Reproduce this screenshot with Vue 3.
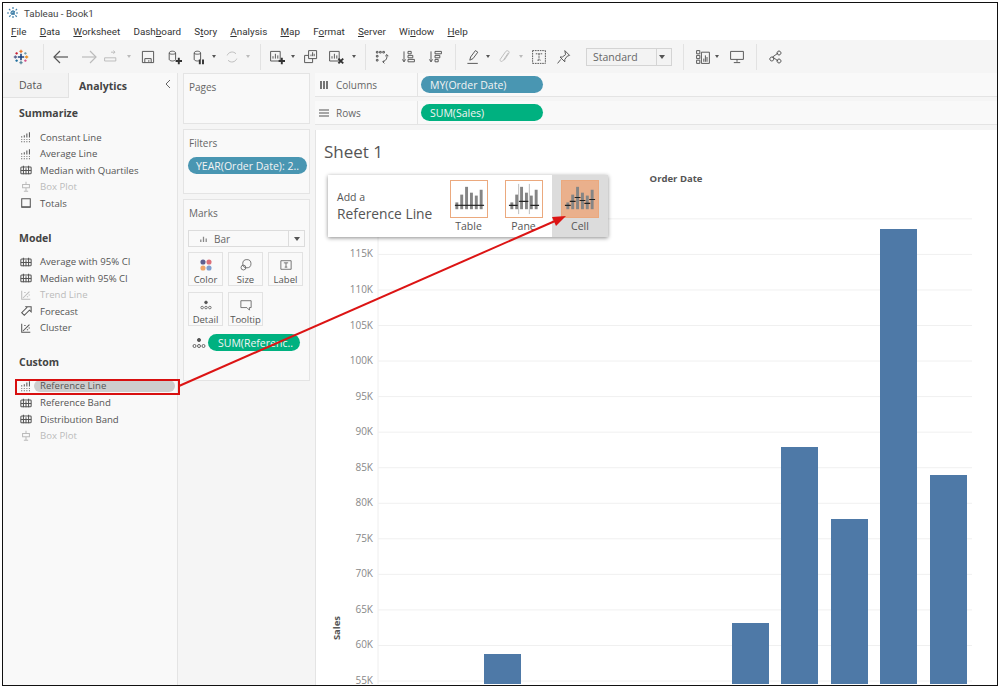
<script setup>
const menus = [
  ['', 'F', 'ile'], ['', 'D', 'ata'], ['', 'W', 'orksheet'], ['Dash', 'b', 'oard'], ['S', 't', 'ory'],
  ['', 'A', 'nalysis'], ['', 'M', 'ap'], ['F', 'o', 'rmat'], ['', 'S', 'erver'], ['Wi', 'n', 'dow'], ['', 'H', 'elp'],
]

// toolbar icons, 20x20 box
const toolIcons = {
  back: ['M17 10H3', 'M9 4l-6 6 6 6'],
  save: ['M3 3h14v14H3z', 'M6 17v-5h8v5', 'M11 14v2'],
  addData: ['M4 5c0-3 8-3 8 0v8c0 1-2 2-4 2s-4-1-4-2z', 'M4 5c0 2 8 2 8 0'],
  pauseData: ['M4 5c0-3 8-3 8 0v8c0 1-2 2-4 2s-4-1-4-2z', 'M4 5c0 2 8 2 8 0'],
  refresh: ['M15 6a6.5 6.5 0 0 0-11 2', 'M5 14a6.5 6.5 0 0 0 11-2'],
  swapGray: ['M2 11h14v4H2z', 'M10 4h5l-2-2M15 4l-2 2'],
  sheet: ['M2 3h12v12H2z', 'M5 12V9M8 12V6M11 12V8'],
  dup: ['M7 2h10v10H7z', 'M2 8h5M2 8v9h10v-5', 'M10 9V7M12 9V4M14 9V6'],
  swapAxes: ['M3 3h2v2H3zM7 3h2v2H7zM11 3h2v2h-2zM3 8h2v2H3zM3 13h2v2H3z', 'M16 7c1 4-1 8-5 9', 'M13 14l-2 2 2 2', 'M14 9l2-2 2 2'],
  sortAsc: ['M5 3v13', 'M3 13l2 3 2-3', 'M10 3h4v3h-4zM10 8h6v3h-6zM10 13h8v3h-8z'],
  sortDesc: ['M5 3v13', 'M3 13l2 3 2-3', 'M10 3h8v3h-8zM10 8h6v3h-6zM10 13h4v3h-4z'],
  highlight: ['M6 14l1-4 6-8 3 2-6 8z', 'M3 18h13'],
  clip: ['M14 5l-6 9c-2 3-5 1-4-1l7-10c2-2 5 0 4 2l-6 9'],
  text: ['M2 2h16M2 18h16M2 2v16M18 2v16', 'M6 6h8M10 6v8M8 14h4'],
  pin: ['M11 2l6 6-3 1-3 4 0 3-6-6 3 0 4-3z', 'M6 13l-4 5'],
  showMe: ['M2 2h4v4H2zM2 8h4v4H2zM2 14h4v4H2z', 'M8 4h10v14H8z', 'M11 16v-4M13 16V8M15 16v-6'],
  present: ['M2 3h16v10H2z', 'M10 13v3M6 17h8'],
  share: ['M7 10l7-5M7 10l7 5', 'M6 10a2.5 2.5 0 1 1-.01 0zM15 2.5a2.5 2.5 0 1 1-.01 0zM15 12.5a2.5 2.5 0 1 1-.01 0z'],
}

const tools = [
  { w: 36, logo: true }, { w: 8, sep: true },
  { w: 28, icon: 'back', size: 20 }, { w: 27, icon: 'back', flip: true, faint: true, size: 20 },
  { w: 18, icon: 'swapGray', faint: true }, { w: 18, drop: true, faint: true },
  { w: 20, icon: 'save' }, { w: 32, icon: 'addData', badge: 'plus' },
  { w: 18, icon: 'pauseData', badge: 'pause' }, { w: 12, drop: true },
  { w: 24, icon: 'refresh', faint: true }, { w: 8, drop: true, faint: true }, { w: 16, sep: true },
  { w: 18, icon: 'sheet', badge: 'plus' }, { w: 14, drop: true }, { w: 22, icon: 'dup' },
  { w: 28, icon: 'sheet', badge: 'cross' }, { w: 8, drop: true }, { w: 14, sep: true },
  { w: 20, icon: 'swapAxes' }, { w: 32, icon: 'sortAsc' }, { w: 22, icon: 'sortDesc' }, { w: 18, sep: true },
  { w: 18, icon: 'highlight' }, { w: 12, drop: true }, { w: 22, icon: 'clip', faint: true },
  { w: 10, drop: true, faint: true }, { w: 26, icon: 'text', dashed: true }, { w: 24, icon: 'pin' },
]
const toolsEnd = [
  { w: 22, sep: true }, { w: 18, icon: 'showMe' }, { w: 10, drop: true }, { w: 30, icon: 'present' },
  { w: 8, sep: true }, { w: 30, icon: 'share' },
]

// analytics pane icons, 14x14 box
const paneIcons = {
  line: ['M2 6v1.5M5 5v2.5M8 3v4.5M11 1.5v6', 'M2 9.5v1M5 9.5v1M8 9.5v1M11 9.5v1M2 12v1M5 12v1M8 12v1M11 12v1'],
  band: ['M2 3.5h10a1 1 0 0 1 1 1v6a1 1 0 0 1-1 1H2a1 1 0 0 1-1-1v-6a1 1 0 0 1 1-1z', 'M1 7.5h12M4 2v10M7 5v7M10 2v10'],
  box: ['M7 1v3M3 4h8v4H3zM7 8v4M4.5 12h5'],
  totals: ['M2 2h10v10H2z', 'M2 11.5h10'],
  trend: ['M2 2v10h10', 'M3.5 10.5L11 3', 'M8 9h1.5M5 4h1.5M10 7h1.5'],
  forecast: ['M7 2h6v6l-2-2-6 6-3-3 6-6z'],
}

const sections = [
  { title: 'Summarize', items: [
    { label: 'Constant Line', icon: 'line' }, { label: 'Average Line', icon: 'line' },
    { label: 'Median with Quartiles', icon: 'band' }, { label: 'Box Plot', icon: 'box', off: true },
    { label: 'Totals', icon: 'totals' },
  ] },
  { title: 'Model', items: [
    { label: 'Average with 95% CI', icon: 'band' }, { label: 'Median with 95% CI', icon: 'band' },
    { label: 'Trend Line', icon: 'trend', off: true }, { label: 'Forecast', icon: 'forecast' },
    { label: 'Cluster', icon: 'trend' },
  ] },
  { title: 'Custom', items: [
    { label: 'Reference Line', icon: 'line', on: true }, { label: 'Reference Band', icon: 'band' },
    { label: 'Distribution Band', icon: 'band' }, { label: 'Box Plot', icon: 'box', off: true },
  ] },
]

// plot geometry, relative to the svg under the "Order Date" header
const plotH = 498
const zeroY = 495
const yFor = v => zeroY - (v - 55) * 7.11
const ticks = []
for (let v = 55; v <= 120; v += 5) ticks.push({ v, y: yFor(v) })
const bars = [
  { x: 168, top: 468 }, { x: 416, top: 437 }, { x: 465, top: 261 },
  { x: 515, top: 333 }, { x: 564, top: 43 }, { x: 614, top: 289 },
]

// bars + line for the little reference line previews
const preview = [[6, 22], [11, 14], [16, 6], [21, 12], [26, 15], [31, 9]]
</script>

<template>
  <div class="frame">
    <div class="title-bar">
      <svg class="app-icon" viewBox="0 0 12 12">
        <path d="M6 0v12M0 6h12M2 2l8 8M10 2l-8 8" stroke="#3f7fa8" stroke-width="1.2" stroke-dasharray="2 1" fill="none" />
      </svg>
      <span>Tableau - Book1</span>
    </div>

    <div class="menu-bar">
      <span v-for="m in menus" :key="m[1] + m[2]">{{ m[0] }}<u>{{ m[1] }}</u>{{ m[2] }}</span>
    </div>

    <div class="tool-bar">
      <template v-for="(list, n) in [tools, toolsEnd]" :key="n">
        <div v-if="n === 1" class="combo">
          <span>Standard</span>
          <i class="combo-arrow"></i>
        </div>
        <div
          v-for="(t, i) in list"
          :key="i"
          class="tool"
          :class="{ faint: t.faint }"
          :style="{ width: t.w + 'px' }"
        >
          <i v-if="t.sep" class="tool-sep"></i>
          <i v-else-if="t.drop" class="tool-drop"></i>
          <svg v-else-if="t.logo" class="tool-logo" viewBox="0 0 20 20" fill="none" stroke-width="1.6">
            <path d="M10 6v8M6 10h8" stroke="#1f447e" stroke-width="2" />
            <path d="M10 1v4M8 3h4" stroke="#e8762d" />
            <path d="M10 15v4M8 17h4" stroke="#59879b" />
            <path d="M1 10h4M3 8v4" stroke="#5b6591" />
            <path d="M15 10h4M17 8v4" stroke="#eb912b" />
            <path d="M4.5 4v3M3 5.5h3" stroke="#c72035" />
            <path d="M15.5 4v3M14 5.5h3" stroke="#7099a6" />
            <path d="M4.5 13v3M3 14.5h3" stroke="#1f6f9f" />
            <path d="M15.5 13v3M14 14.5h3" stroke="#d4548a" />
          </svg>
          <svg
            v-else
            class="tool-icon"
            :class="{ flip: t.flip, dashed: t.dashed, wide: t.size }"
            viewBox="0 0 20 20"
          >
            <path v-for="d in toolIcons[t.icon]" :key="d" :d="d" />
            <path v-if="t.badge === 'plus'" class="badge" d="M16 11v8M12 15h8" />
            <path v-if="t.badge === 'pause'" class="badge" d="M11 13v6M15 13v6" />
            <path v-if="t.badge === 'cross'" class="badge" d="M13 12l6 6M19 12l-6 6" />
          </svg>
        </div>
      </template>
    </div>

    <div class="work">
      <aside class="side">
        <div class="tabs">
          <div class="tab tab-data">Data</div>
          <div class="tab tab-active">Analytics</div>
          <svg class="tab-back" viewBox="0 0 8 10"><path d="M6 1L2 5l4 4" /></svg>
        </div>
        <section v-for="s in sections" :key="s.title" class="group">
          <h3>{{ s.title }}</h3>
          <div
            v-for="item in s.items"
            :key="item.label"
            class="row"
            :class="{ off: item.off, on: item.on }"
          >
            <svg viewBox="0 0 14 14"><path v-for="d in paneIcons[item.icon]" :key="d" :d="d" /></svg>
            <span>{{ item.label }}</span>
          </div>
        </section>
      </aside>

      <div class="cards">
        <div class="card card-pages"><h4>Pages</h4></div>
        <div class="card card-filters">
          <h4>Filters</h4>
          <div class="pill blue pill-filter">YEAR(Order Date): 2..</div>
        </div>
        <div class="card card-marks">
          <h4>Marks</h4>
          <div class="mark-type">
            <svg viewBox="0 0 10 10"><path d="M2 9V6M5 9V3M8 9V5" /></svg>
            <span>Bar</span>
            <b><i class="combo-arrow"></i></b>
          </div>
          <div class="mark-grid">
            <div class="mark-btn">
              <svg viewBox="0 0 14 14">
                <circle cx="3.5" cy="3.5" r="3" fill="#5f5f8f" />
                <circle cx="10.5" cy="3.5" r="3" fill="#dd6f78" />
                <circle cx="3.5" cy="10.5" r="3" fill="#efa56a" />
                <circle cx="10.5" cy="10.5" r="3" fill="#7f9fd0" />
              </svg>
              <span>Color</span>
            </div>
            <div class="mark-btn">
              <svg viewBox="0 0 14 14" class="line-icon">
                <circle cx="8" cy="5.5" r="4.8" /><circle cx="4" cy="10" r="2.8" />
              </svg>
              <span>Size</span>
            </div>
            <div class="mark-btn">
              <svg viewBox="0 0 14 14" class="line-icon">
                <path d="M1 2h12v10H1z" /><path d="M4.5 4.5h5M7 4.5v5M5.5 9.5h3" />
              </svg>
              <span>Label</span>
            </div>
            <div class="mark-btn">
              <svg viewBox="0 0 14 14" class="line-icon">
                <circle cx="7" cy="4" r="1.6" fill="#555" />
                <circle cx="2.5" cy="10" r="1.5" /><circle cx="7" cy="10" r="1.5" /><circle cx="11.5" cy="10" r="1.5" />
              </svg>
              <span>Detail</span>
            </div>
            <div class="mark-btn">
              <svg viewBox="0 0 14 14" class="line-icon"><path d="M1 2h12v8h-2v3l-3-3H1z" /></svg>
              <span>Tooltip</span>
            </div>
          </div>
          <div class="mark-field">
            <svg viewBox="0 0 14 14" class="line-icon">
              <circle cx="7" cy="4" r="1.6" fill="#555" />
              <circle cx="2.5" cy="10" r="1.5" /><circle cx="7" cy="10" r="1.5" /><circle cx="11.5" cy="10" r="1.5" />
            </svg>
            <div class="pill green pill-mark">SUM(Referenc..</div>
          </div>
        </div>
      </div>

      <div class="view">
        <div class="shelf">
          <div class="shelf-name">
            <svg viewBox="0 0 10 10"><path d="M2 1v8M5 1v8M8 1v8" stroke-width="1.6" /></svg>
            <span>Columns</span>
          </div>
          <div class="pill blue pill-shelf">MY(Order Date)</div>
        </div>
        <div class="shelf">
          <div class="shelf-name">
            <svg viewBox="0 0 10 10"><path d="M0 2h10M0 5h10M0 8h10" stroke-width="1.1" /></svg>
            <span>Rows</span>
          </div>
          <div class="pill green pill-shelf">SUM(Sales)</div>
        </div>

        <div class="sheet">
          <div class="sheet-title">Sheet 1</div>
          <div class="axis-title">Order Date</div>
          <svg class="plot" :viewBox="`0 0 682 ${plotH}`">
            <line x1="62" x2="62" y1="0" :y2="plotH" class="axis" />
            <g v-for="t in ticks" :key="t.v">
              <line x1="62" x2="656" :y1="t.y" :y2="t.y" class="grid" />
              <!-- the 120K label sits under the popup -->
              <text v-if="t.v < 120" x="57" :y="t.y + 3" class="tick">{{ t.v }}K</text>
            </g>
            <rect v-for="b in bars" :key="b.x" :x="b.x" :y="b.top" width="37" :height="plotH - b.top" class="bar" />
            <text transform="translate(24 442) rotate(-90)" class="y-title">Sales</text>
          </svg>

          <div class="popup">
            <div class="popup-text">
              <small>Add a</small>
              <strong>Reference Line</strong>
            </div>
            <div v-for="kind in ['Table', 'Pane', 'Cell']" :key="kind" class="scope" :class="{ picked: kind === 'Cell' }">
              <svg viewBox="0 0 37 37">
                <rect v-for="p in preview" :key="p[0]" :x="p[0] - 1.5" :y="p[1]" width="3" :height="29 - p[1]" class="preview-bar" />
                <path v-if="kind === 'Table'" d="M4 25h30" class="preview-line" />
                <path v-if="kind === 'Pane'" d="M3 25h9M13 21h10M25 25h9" class="preview-line" />
                <path v-if="kind === 'Pane'" d="M13 3v31M24 3v31" class="preview-div" />
                <path v-if="kind === 'Cell'" d="M3 25h6M8 21h6M13 17h6M18 20h6M23 23h6M28 19h6" class="preview-line" />
              </svg>
              <span>{{ kind }}</span>
            </div>
          </div>
        </div>
      </div>
    </div>

    <!-- callout drawn on top of the screenshot -->
    <div class="callout-box"></div>
    <svg class="callout-arrow" viewBox="0 0 1002 690">
      <path d="M179 386L555 221" stroke="#dc1414" stroke-width="2" fill="none" />
      <path d="M566 216L552 217L556 226z" fill="#dc1414" />
    </svg>
  </div>
</template>

<style scoped>
.frame {
  position: relative;
  width: 996px;
  height: 684px;
  margin: 2px 0 0 2px;
  box-sizing: border-box;
  border: 1.5px solid #111;
  overflow: hidden;
  background: #fff;
  color: #444;
  font-family: "Open Sans", "Noto Sans", sans-serif;
  display: flex;
  flex-direction: column;
}

.title-bar {
  height: 20px;
  display: flex;
  align-items: center;
  gap: 5px;
  padding-left: 4px;
  font-family: Roboto, sans-serif;
  font-size: 9.8px;
  color: #444;
  flex: none;
}
.app-icon {
  width: 12px;
  height: 12px;
}

.menu-bar {
  height: 17px;
  display: flex;
  align-items: center;
  gap: 13.2px;
  padding-left: 8px;
  font-family: Roboto, sans-serif;
  font-size: 9.9px;
  color: #333;
  flex: none;
}

.tool-bar {
  height: 33px;
  background: #f5f5f5;
  display: flex;
  align-items: center;
  flex: none;
}
.tool {
  height: 100%;
  flex: none;
  display: flex;
  align-items: center;
  justify-content: center;
  color: #555;
}
.tool.faint {
  color: #bbb;
}
.tool-sep {
  width: 1px;
  height: 26px;
  background: #e2e2e2;
}
.tool-drop {
  width: 0;
  height: 0;
  border: 2px solid transparent;
  border-top: 3px solid currentColor;
  border-bottom: 0;
}
.tool-logo {
  width: 16px;
  height: 16px;
}
.tool-icon {
  width: 16px;
  height: 16px;
  flex: none;
  overflow: visible;
  fill: none;
  stroke: currentColor;
  stroke-width: 1.2;
}
.tool-icon.wide {
  width: 20px;
  height: 20px;
}
.tool-icon.flip {
  transform: scaleX(-1);
}
.tool-icon.dashed {
  stroke-dasharray: 2 1;
}
.tool-icon .badge {
  stroke: #333;
  stroke-width: 2.4;
  stroke-dasharray: none;
}
.combo {
  width: 86px;
  height: 18px;
  margin-left: 10px;
  flex: none;
  box-sizing: border-box;
  display: flex;
  align-items: center;
  border: 1px solid #d4d4d4;
  background: #f3f3f3;
  font-size: 10.5px;
  color: #666;
  padding-left: 6px;
  position: relative;
}
.combo span {
  flex: 1;
}
.combo-arrow {
  width: 0;
  height: 0;
  border: 3px solid transparent;
  border-top: 4px solid #555;
  border-bottom: 0;
  display: block;
}
.combo .combo-arrow {
  margin-right: 6px;
}
.combo::after {
  content: "";
  position: absolute;
  right: 14px;
  top: 0;
  bottom: 0;
  width: 1px;
  background: #d4d4d4;
}

.work {
  flex: 1;
  min-height: 0;
  display: flex;
  background: #f5f5f5;
}

.side {
  width: 174px;
  flex: none;
  background: #f9f9f9;
  border-right: 1px solid #e4e4e4;
}
.tabs {
  display: flex;
  height: 25px;
  position: relative;
  font-size: 10.5px;
}
.tab {
  display: flex;
  align-items: center;
  box-sizing: border-box;
}
.tab-data {
  width: 66px;
  padding-left: 16px;
  color: #555;
  background: #f3f3f3;
  border-right: 1px solid #e2e2e2;
  border-bottom: 1px solid #e2e2e2;
}
.tab-active {
  flex: 1;
  padding-left: 10px;
  font-weight: 700;
  color: #444;
}
.tab-back {
  position: absolute;
  right: 5px;
  top: 6px;
  width: 8px;
  height: 10px;
  fill: none;
  stroke: #666;
}
.group {
  padding-top: 8px;
  height: 124.5px;
  box-sizing: border-box;
}
.group h3 {
  margin: 0 0 8px 16px;
  height: 15px;
  line-height: 15px;
  font-size: 10.5px;
  font-weight: 700;
  color: #444;
}
.row {
  height: 16.5px;
  display: flex;
  align-items: center;
  gap: 8px;
  margin: 0 2px 0 17px;
  font-size: 9.6px;
  color: #555;
}
.row svg {
  width: 12px;
  height: 12px;
  flex: none;
  fill: none;
  stroke: #555;
  stroke-width: 1.2;
}
.row.off {
  color: #bbb;
}
.row.off svg {
  stroke: #bbb;
}
.row.on span {
  flex: 1;
  height: 12px;
  line-height: 12px;
  margin-left: -6px;
  padding-left: 6px;
  border-radius: 6px;
  background: #cdcdcd;
}

.cards {
  width: 127px;
  flex: none;
  padding: 0 5px;
  display: flex;
  flex-direction: column;
  gap: 5px;
}
.card {
  box-sizing: border-box;
  background: #f9f9f9;
  border: 1px solid #e4e4e4;
  padding: 6px 4px;
}
.card h4 {
  margin: 0 0 0 1px;
  font-size: 10px;
  font-weight: 400;
  color: #666;
  line-height: 14px;
}
.card-pages {
  height: 51px;
}
.card-filters {
  height: 65px;
}
.card-marks {
  height: 182px;
}
.pill {
  border-radius: 9px;
  color: #f4f4f4;
  font-size: 10.5px;
  display: flex;
  align-items: center;
  white-space: nowrap;
  overflow: hidden;
  box-sizing: border-box;
}
.blue {
  background: #4996b2;
}
.green {
  background: #00b180;
}
.pill-filter {
  margin-top: 7px;
  height: 17px;
  width: 119px;
  padding-left: 8px;
}

.mark-type {
  height: 17px;
  margin-top: 10px;
  box-sizing: border-box;
  border: 1px solid #dcdcdc;
  display: flex;
  align-items: center;
  font-size: 10px;
  color: #666;
}
.mark-type svg {
  width: 9px;
  height: 9px;
  margin: 0 6px 0 10px;
  fill: none;
  stroke: #888;
  stroke-width: 1.4;
}
.mark-type span {
  flex: 1;
}
.mark-type b {
  width: 15px;
  height: 100%;
  display: flex;
  align-items: center;
  justify-content: center;
  border-left: 1px solid #dcdcdc;
}
.mark-grid {
  display: grid;
  grid-template-columns: repeat(3, 35px);
  gap: 6px 5px;
  margin-top: 5px;
}
.mark-btn {
  height: 34px;
  box-sizing: border-box;
  border: 1px solid #e2e2e2;
  display: flex;
  flex-direction: column;
  align-items: center;
  gap: 2px;
  padding-top: 6px;
  font-size: 9.5px;
  color: #555;
}
.mark-btn svg {
  width: 12px;
  height: 12px;
  flex: none;
}
.line-icon {
  fill: none;
  stroke: #555;
  stroke-width: 0.9;
}
.mark-field {
  display: flex;
  align-items: center;
  gap: 2px;
  margin: 8px 0 0 4px;
}
.mark-field svg {
  width: 14px;
  height: 14px;
  flex: none;
}
.pill-mark {
  width: 92px;
  height: 17px;
  padding-left: 10px;
}

.view {
  flex: 1;
  min-width: 0;
  display: flex;
  flex-direction: column;
  gap: 4px;
}
.shelf {
  height: 24px;
  flex: none;
  display: flex;
  align-items: center;
  background: #f9f9f9;
  border-bottom: 1px solid #e4e4e4;
  box-sizing: border-box;
}
.shelf-name {
  width: 103px;
  height: 100%;
  box-sizing: border-box;
  padding-left: 4px;
  margin-right: 3px;
  border-right: 1px solid #e4e4e4;
  display: flex;
  align-items: center;
  gap: 7px;
  font-size: 10px;
  color: #666;
}
.shelf-name svg {
  width: 10px;
  height: 10px;
  fill: none;
  stroke: #555;
}
.pill-shelf {
  width: 122px;
  height: 17px;
  padding-left: 9px;
}

.sheet {
  flex: 1;
  min-height: 0;
  position: relative;
  margin-top: 1px;
  background: #fff;
  border-left: 1px solid #e4e4e4;
  display: flex;
  flex-direction: column;
}
.sheet-title {
  height: 40px;
  padding: 11px 0 0 8px;
  box-sizing: border-box;
  font-size: 17px;
  line-height: 22px;
  color: #555;
  flex: none;
}
.axis-title {
  height: 16px;
  flex: none;
  text-align: center;
  width: 720px;
  font-size: 9.5px;
  font-weight: 700;
  line-height: 18px;
  color: #555;
}
.plot {
  width: 682px;
  height: 498px;
  flex: none;
  display: block;
  overflow: visible;
}
.axis {
  stroke: #eee;
}
.grid {
  stroke: #f0f0f0;
}
.tick {
  font-size: 10px;
  fill: #888;
  text-anchor: end;
}
.y-title {
  font-size: 9.5px;
  font-weight: 700;
  fill: #555;
  text-anchor: middle;
}
.bar {
  fill: #4e79a7;
}

.popup {
  position: absolute;
  left: 12px;
  top: 45px;
  width: 280px;
  height: 62px;
  box-sizing: border-box;
  display: flex;
  background: #fff;
  box-shadow: 0 1px 4px rgba(0, 0, 0, 0.45);
}
.popup-text {
  width: 113px;
  flex: none;
  padding: 15px 0 0 9px;
  box-sizing: border-box;
  display: flex;
  flex-direction: column;
  color: #555;
}
.popup-text small {
  font-size: 10.5px;
  line-height: 15px;
}
.popup-text strong {
  font-size: 13.8px;
  font-weight: 400;
  line-height: 18px;
  white-space: nowrap;
}
.scope {
  width: 55px;
  flex: none;
  padding-top: 5px;
  display: flex;
  flex-direction: column;
  align-items: center;
  font-size: 10.5px;
  color: #555;
  gap: 1px;
}
.scope svg {
  width: 38px;
  height: 38px;
  box-sizing: border-box;
  border: 1px solid #eba97e;
  background: #fff;
}
.scope.picked {
  width: 56px;
  margin-left: auto;
  background: #dcdcdc;
}
.scope.picked svg {
  background: #eab08c;
}
.preview-bar {
  fill: #858585;
}
.preview-line {
  stroke: #222;
  stroke-width: 1.2;
  fill: none;
}
.preview-div {
  stroke: #aaa;
  stroke-width: 0.8;
  fill: none;
}

.callout-box {
  position: absolute;
  left: 11.5px;
  top: 375.5px;
  width: 165px;
  height: 16px;
  box-sizing: border-box;
  border: 2px solid #d80f0f;
}
.callout-arrow {
  position: absolute;
  left: -3.5px;
  top: -3.5px;
  width: 1002px;
  height: 690px;
  pointer-events: none;
}
</style>

<style>
html,
body {
  background: #fff;
}
</style>
